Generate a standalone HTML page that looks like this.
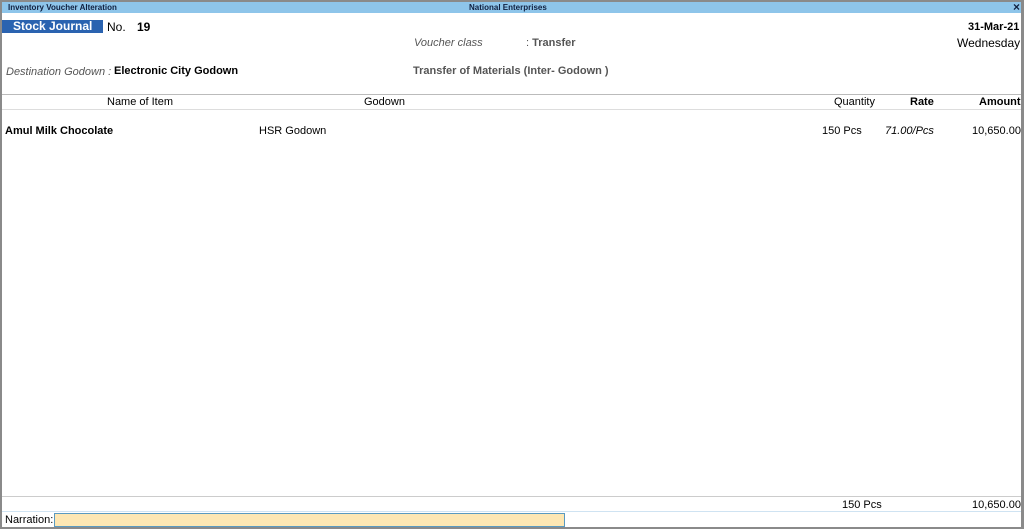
<!DOCTYPE html>
<html><head><style>
*{margin:0;padding:0;box-sizing:border-box}
body{width:1024px;height:529px;background:#fff;font-family:"Liberation Sans",Arial,sans-serif;font-size:11px;color:#000;position:relative;overflow:hidden}
.frame{position:absolute;left:0;top:0;width:1024px;height:529px;border:2px solid #8a8a8a;border-right-width:3px}
.t{position:absolute;white-space:nowrap}
.b{font-weight:bold}
.i{font-style:italic}
.g{color:#555}
</style></head><body>
<div class="t" style="left:2px;top:2px;width:1019px;height:11px;background:#8ec5ea"></div>
<div class="t b" style="left:8px;top:2px;font-size:8px;line-height:11px;color:#102040">Inventory Voucher Alteration</div>
<div class="t b" style="left:469px;top:2px;font-size:8px;line-height:11px;color:#102040">National Enterprises</div>
<div class="t b" style="left:1013px;top:2px;font-size:12px;line-height:11px;color:#102040">×</div>
<div class="t" style="left:2px;top:20px;width:101px;height:13px;background:#2a63b0"></div>
<div class="t b" style="left:13px;top:20px;font-size:12px;line-height:13px;color:#fff">Stock Journal</div>
<div class="t" style="left:107px;top:20px;font-size:12px;line-height:14px">No.</div>
<div class="t b" style="left:137px;top:20px;font-size:12px;line-height:14px">19</div>
<div class="t b" style="left:968px;top:21px;font-size:11px">31-Mar-21</div>
<div class="t" style="left:957px;top:36px;font-size:12px">Wednesday</div>
<div class="t i g" style="left:414px;top:37px">Voucher class</div>
<div class="t g" style="left:526px;top:37px">: <b>Transfer</b></div>
<div class="t i g" style="left:6px;top:66px">Destination Godown :</div>
<div class="t b" style="left:114px;top:65px;font-size:11px">Electronic City Godown</div>
<div class="t b g" style="left:413px;top:65px">Transfer of Materials (Inter- Godown )</div>
<div class="t" style="left:2px;top:94px;width:1019px;height:1px;background:#bbb"></div>
<div class="t" style="left:2px;top:109px;width:1019px;height:1px;background:#ddd"></div>
<div class="t" style="left:107px;top:96px">Name of Item</div>
<div class="t" style="left:364px;top:96px">Godown</div>
<div class="t" style="left:834px;top:96px">Quantity</div>
<div class="t b" style="left:910px;top:96px">Rate</div>
<div class="t b" style="left:979px;top:96px">Amount</div>
<div class="t b" style="left:5px;top:125px">Amul Milk Chocolate</div>
<div class="t" style="left:259px;top:125px">HSR Godown</div>
<div class="t" style="left:822px;top:125px">150 Pcs</div>
<div class="t i" style="left:885px;top:125px">71.00/Pcs</div>
<div class="t" style="left:972px;top:125px">10,650.00</div>
<div class="t" style="left:2px;top:496px;width:1019px;height:1px;background:#ccc"></div>
<div class="t" style="left:842px;top:499px">150 Pcs</div>
<div class="t" style="left:972px;top:499px">10,650.00</div>
<div class="t" style="left:2px;top:511px;width:1019px;height:1px;background:#cfe3f2"></div>
<div class="t" style="left:5px;top:514px">Narration:</div>
<div class="t" style="left:54px;top:513px;width:511px;height:14px;background:#fde7b3;border:1px solid #5a9ac0"></div>
<div class="frame"></div>
</body></html>
